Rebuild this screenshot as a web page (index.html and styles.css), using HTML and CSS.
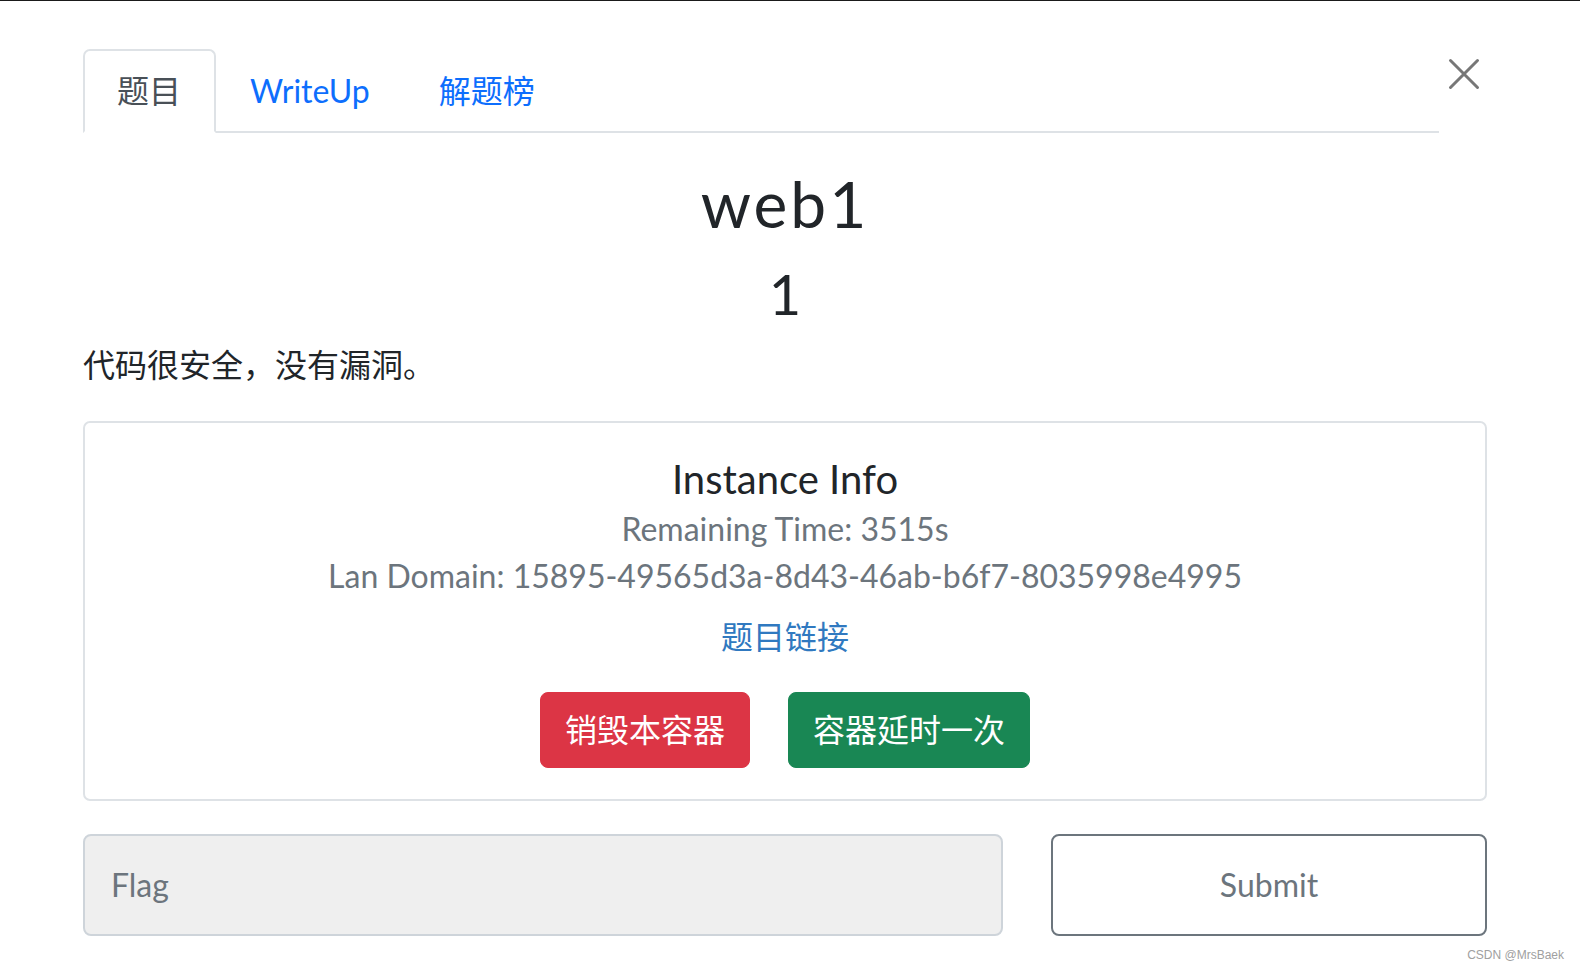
FILE: index.html
```html
<!DOCTYPE html>
<html lang="zh">
<head>
<meta charset="utf-8">
<title>web1</title>
<link rel="stylesheet" href="styles.css">
</head>
<body>
<div class="top-line"></div>
<div class="modal">
  <div class="header">
    <ul class="tabs">
      <li class="tab active">题目</li>
      <li class="tab">WriteUp</li>
      <li class="tab">解题榜</li>
    </ul>
    <button class="close" aria-label="Close">
      <svg width="32" height="32" viewBox="0 0 32 32"><path d="M2.5 2.5 L29.5 29.5 M29.5 2.5 L2.5 29.5" stroke="#777" stroke-width="3" stroke-linecap="round" fill="none"/></svg>
    </button>
  </div>
  <h2 class="name">web1</h2>
  <h3 class="value">1</h3>
  <p class="desc">代码很安全，没有漏洞。</p>
  <div class="instance">
    <h5 class="inst-title">Instance Info</h5>
    <div class="muted first">Remaining Time: 3515s</div>
    <div class="muted">Lan Domain: 15895-49565d3a-8d43-46ab-b6f7-8035998e4995</div>
    <a class="link" href="#">题目链接</a>
    <div class="actions">
      <button class="btn btn-red">销毁本容器</button>
      <button class="btn btn-green">容器延时一次</button>
    </div>
  </div>
  <div class="submit-row">
    <div class="flag-input">Flag</div>
    <button class="submit">Submit</button>
  </div>
  <div class="watermark">CSDN @MrsBaek</div>
</div>
</body>
</html>
```
FILE: styles.css
```css
html, body {
  margin: 0;
  padding: 0;
  background: #fff;
  overflow: hidden;
}
body {
  font-family: "Lato", "Noto Sans CJK SC", sans-serif;
  color: #212529;
  font-size: 32px;
}
.top-line {
  height: 1px;
  background: #1a1a1a;
}
.modal {
  margin: 0 93px 0 83px;
  padding-top: 48px;
}
.header {
  display: flex;
  align-items: flex-start;
}
.tabs {
  flex: 1;
  display: flex;
  list-style: none;
  margin: 0;
  padding: 0;
  border-bottom: 2px solid #dee2e6;
}
.tab {
  padding: 16px 33px 16px 32px;
  line-height: 48px;
  font-size: 32px;
  color: #0d6efd;
  border: 2px solid transparent;
  border-bottom: none;
  border-radius: 7px 7px 0 0;
  margin-bottom: -2px;
}
.tab.active {
  color: #495057;
  border-color: #dee2e6;
  background: #fff;
  border-bottom: 2px solid #fff;
}
.close {
  width: 48px;
  height: 48px;
  border: none;
  background: none;
  padding: 2px 0 0 9px;
  margin: 0;
  display: block;
}
.close svg {
  display: block;
}
.name {
  margin: 33px 0 0;
  text-align: center;
  font-size: 64px;
  font-weight: 400;
  line-height: 1.2;
  letter-spacing: 3px;
}
.value {
  margin: 17px 0 0;
  text-align: center;
  font-size: 56px;
  font-weight: 400;
  line-height: 1.2;
}
.desc {
  margin: 14px 0 0;
  font-size: 32px;
  line-height: 48px;
}
.instance {
  margin-top: 32px;
  border: 2px solid #dee2e6;
  border-radius: 7px;
  padding: 32px 0 31px;
  text-align: center;
}
.inst-title {
  margin: 0;
  font-size: 40px;
  font-weight: 400;
  line-height: 48px;
}
.muted {
  color: #6c757d;
  font-size: 32px;
  line-height: 47px;
}
.muted.first {
  margin-top: 2px;
}
.link {
  display: inline-block;
  margin-top: 14px;
  color: #3079c0;
  text-decoration: none;
  font-size: 32px;
  line-height: 48px;
}
.actions {
  display: flex;
  justify-content: center;
  gap: 38px;
  margin-top: 31px;
}
.btn {
  font-family: "Lato", "Noto Sans CJK SC", sans-serif;
  font-size: 32px;
  line-height: 48px;
  padding: 13px 24px;
  border: 1px solid transparent;
  border-radius: 8px;
  color: #fff;
}
.btn-red {
  background: #dc3545;
  border-color: #dc3545;
}
.btn-green {
  background: #198754;
  border-color: #198754;
}
.submit-row {
  display: flex;
  gap: 48px;
  margin-top: 33px;
}
.flag-input {
  flex: 1;
  height: 98px;
  border: 2px solid #ced4da;
  border-radius: 8px;
  background: #efefef;
  color: #6c757d;
  font-size: 32px;
  line-height: 98px;
  padding: 0 26px;
}
.submit {
  flex: 0 0 436px;
  height: 102px;
  border: 2px solid #6c757d;
  border-radius: 8px;
  background: #fff;
  color: #6c757d;
  font-family: "Lato", "Noto Sans CJK SC", sans-serif;
  font-size: 32px;
}
.watermark {
  text-align: right;
  margin-right: -77px;
  margin-top: 12px;
  font-family: "Liberation Sans", Arial, sans-serif;
  font-size: 12px;
  line-height: 14px;
  color: #a0a0a0;
}
```
